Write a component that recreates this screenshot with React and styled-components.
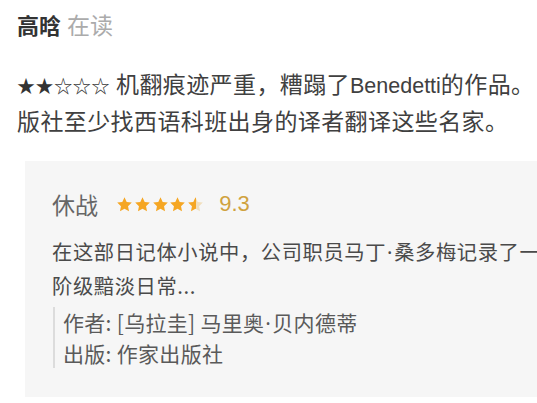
import React from 'react';
import styled, { createGlobalStyle } from 'styled-components';

const GlobalStyle = createGlobalStyle`
  html, body {
    margin: 0;
    padding: 0;
    background: #ffffff;
    overflow: hidden;
  }
  body {
    font-family: "Noto Sans CJK SC", "Noto Sans", sans-serif;
  }
`;

const Page = styled.div`
  width: 537px;
  height: 403px;
  overflow: hidden;
  padding: 9px 0 0 17px;
  box-sizing: border-box;
`;

const Header = styled.div`
  display: flex;
  align-items: baseline;
  gap: 6px;
  height: 30px;
  line-height: 30px;
`;

const UserName = styled.span`
  font-size: 22px;
  font-weight: 700;
  color: #333333;
`;

const Status = styled.span`
  font-size: 23px;
  color: #ababab;
`;

const Review = styled.div`
  margin-top: 27px;
  font-size: 23px;
  line-height: 34px;
  color: #404040;
  letter-spacing: 0.4px;
`;

const Line = styled.div`
  white-space: nowrap;
`;

const RatingStars = styled.span`
  display: inline-block;
  font-size: 18px;
  line-height: 1;
  letter-spacing: 0.6px;
  margin-right: 6px;
  color: #333;
`;

const Latin = styled.span`
  font-family: "Liberation Sans", Arial, sans-serif;
  font-size: 21.5px;
  letter-spacing: 0;
`;

const Dot = styled.span`
  font-family: "Noto Sans", sans-serif;
  margin: 0 1px;
`;

const Card = styled.div`
  margin-top: 24px;
  margin-left: 8px;
  width: 620px;
  background: #f6f6f6;
  padding: 28px 0 29px 27px;
  box-sizing: border-box;
`;

const TitleRow = styled.div`
  display: flex;
  align-items: center;
  height: 30px;
`;

const BookTitle = styled.span`
  font-size: 23px;
  color: #666666;
  margin-right: 18px;
`;

const Stars = styled.span`
  display: flex;
  gap: 0.8px;
  margin-right: 15px;
`;

const Score = styled.span`
  font-family: "Liberation Sans", Arial, sans-serif;
  font-size: 22px;
  color: #d0a23e;
`;

const Desc = styled.div`
  margin-top: 16px;
  font-size: 20.3px;
  line-height: 33px;
  letter-spacing: 0.6px;
  color: #4a4a4a;
`;

const Meta = styled.div`
  margin-top: 5px;
  margin-left: 1px;
  border-left: 2px solid #dcdcdc;
  padding-left: 8px;
  font-size: 21px;
  line-height: 30px;
  letter-spacing: 0.3px;
  color: #5a5a5a;
`;

function Star({ fill }) {
  const id = `half-${fill}`;
  return (
    <svg width="17" height="17" viewBox="0 0 24 24">
      <defs>
        <linearGradient id={id} x1="0" x2="1" y1="0" y2="0">
          <stop offset={fill} stopColor="#f5a623" />
          <stop offset={fill} stopColor="#f1dfbd" />
        </linearGradient>
      </defs>
      <path
        d="M12 1.8l3.1 6.6 7.2.9-5.3 5 1.4 7.1L12 17.9l-6.4 3.5 1.4-7.1-5.3-5 7.2-.9z"
        fill={`url(#${id})`}
      />
    </svg>
  );
}

export default function App() {
  return (
    <>
      <GlobalStyle />
      <Page>
        <Header>
          <UserName>高晗</UserName>
          <Status>在读</Status>
        </Header>
        <Review>
          <Line>
            <RatingStars>★★☆☆☆</RatingStars>机翻痕迹严重，糟蹋了<Latin>Benedetti</Latin>的作品。
          </Line>
          <Line>版社至少找西语科班出身的译者翻译这些名家。</Line>
        </Review>
        <Card>
          <TitleRow>
            <BookTitle>休战</BookTitle>
            <Stars>
              <Star fill={1} />
              <Star fill={1} />
              <Star fill={1} />
              <Star fill={1} />
              <Star fill={0.55} />
            </Stars>
            <Score>9.3</Score>
          </TitleRow>
          <Desc>
            <Line>在这部日记体小说中，公司职员马丁<Dot>·</Dot>桑多梅记录了一</Line>
            <Line>阶级黯淡日常...</Line>
          </Desc>
          <Meta>
            <Line>作者: [乌拉圭] 马里奥<Dot>·</Dot>贝内德蒂</Line>
            <Line>出版: 作家出版社</Line>
          </Meta>
        </Card>
      </Page>
    </>
  );
}
